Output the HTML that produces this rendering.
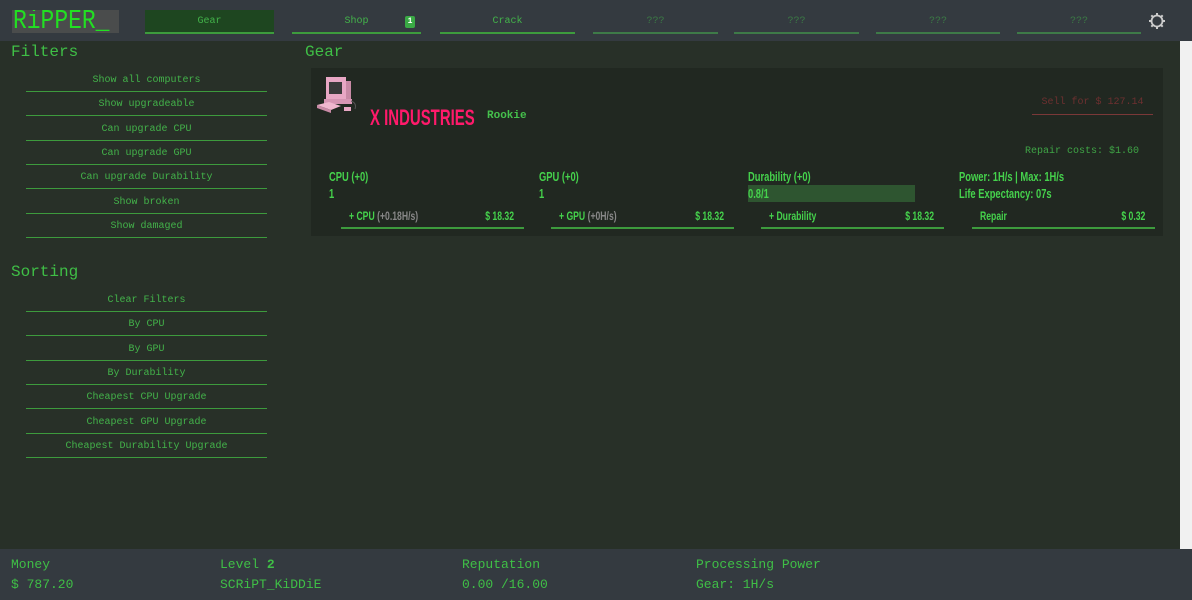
<!DOCTYPE html>
<html><head><style>
*{margin:0;padding:0;box-sizing:border-box}
body{width:1192px;height:600px;overflow:hidden;background:#283028;font-family:"Liberation Mono",monospace;color:#3fbf46;position:relative}
.a{position:absolute}
#top{left:0;top:0;width:1192px;height:41px;background:#343a40}
.tab{position:absolute;top:10px;height:24px;border-bottom:2px solid #3d9b3d;font-size:10px;text-align:center;line-height:24px;color:#43b34a}
.tab.q{color:#3b7a45;border-bottom-color:#3e7a48}
#foot{left:0;top:549px;width:1192px;height:51px;background:#343a40;font-size:13px;color:#3fbf46}
.btn{position:absolute;left:26px;width:241px;height:24px;border-bottom:1px solid #3d9b3d;font-size:10px;text-align:center;line-height:26px;color:#43b34a}
h2{position:absolute;font-weight:normal;font-size:16px;color:#3fbf46}
.n{font-family:"Liberation Sans",sans-serif;font-weight:bold;color:#45d24c;font-size:13px;transform:scaleX(.72);transform-origin:left;white-space:nowrap}
.ub{position:absolute;top:205px;width:183px;height:24px;border-bottom:2px solid #3d9b3d;line-height:22px;font-family:"Liberation Sans",sans-serif;font-weight:bold;color:#45d24c;font-size:12px}
.ub .l{position:absolute;left:8px;transform:scaleX(.72);transform-origin:left;white-space:nowrap}
.ub .r{position:absolute;right:10px;transform:scaleX(.72);transform-origin:right;white-space:nowrap}
</style></head><body>
<div id="top" class="a"></div>
<div class="a" style="left:12px;top:10px;width:107px;height:23px;background:#4a4c4c;overflow:hidden"><div style="color:#22e022;font-size:27px;line-height:24px;font-family:'Liberation Mono',monospace;transform:scaleX(.85);transform-origin:left;white-space:nowrap;margin-left:1px">RiPPER_</div></div>
<div class="tab" style="left:145px;width:129px;background:#1e4620">Gear</div>
<div class="tab" style="left:292px;width:129px">Shop<span style="position:absolute;left:113px;top:6px;width:10px;height:12px;background:#3aaa45;color:#fff;border-radius:2px;font-size:8px;line-height:12px;font-weight:bold">1</span></div>
<div class="tab" style="left:440px;width:135px">Crack</div>
<div class="tab q" style="left:593px;width:125px">???</div>
<div class="tab q" style="left:734px;width:125px">???</div>
<div class="tab q" style="left:876px;width:124px">???</div>
<div class="tab q" style="left:1017px;width:124px">???</div>
<svg class="a" style="left:1148px;top:12px" width="18" height="18" viewBox="0 0 18 18"><circle cx="9" cy="9" r="5.5" fill="none" stroke="#ccc" stroke-width="1.8"/><g stroke="#ccc" stroke-width="2"><path d="M9 1v3M9 14v3M1 9h3M14 9h3M3.3 3.3l2 2M12.7 12.7l2 2M3.3 14.7l2-2M12.7 5.3l2-2"/></g></svg>
<div class="a" style="left:1180px;top:41px;width:12px;height:508px;background:#f1f1f1"></div>

<h2 style="left:11px;top:43px">Filters</h2>
<div class="btn" style="top:68px">Show all computers</div>
<div class="btn" style="top:92px">Show upgradeable</div>
<div class="btn" style="top:117px">Can upgrade CPU</div>
<div class="btn" style="top:141px">Can upgrade GPU</div>
<div class="btn" style="top:165px">Can upgrade Durability</div>
<div class="btn" style="top:190px">Show broken</div>
<div class="btn" style="top:214px">Show damaged</div>
<h2 style="left:11px;top:263px">Sorting</h2>
<div class="btn" style="top:288px">Clear Filters</div>
<div class="btn" style="top:312px">By CPU</div>
<div class="btn" style="top:337px">By GPU</div>
<div class="btn" style="top:361px">By Durability</div>
<div class="btn" style="top:385px">Cheapest CPU Upgrade</div>
<div class="btn" style="top:410px">Cheapest GPU Upgrade</div>
<div class="btn" style="top:434px">Cheapest Durability Upgrade</div>

<h2 style="left:305px;top:43px">Gear</h2>
<div class="a" style="left:311px;top:68px;width:852px;height:168px;background:#212821"></div>
<svg class="a" style="left:316px;top:73px" width="46" height="46" viewBox="0 0 46 46">
<rect x="10" y="4" width="20" height="22" fill="#e8a7c4"/><rect x="30" y="8" width="5" height="18" fill="#c98aa6"/>
<rect x="13" y="9" width="13" height="12" fill="#3a3a3a"/>
<rect x="8" y="26" width="28" height="5" fill="#d695b3"/>
<path d="M1 32l12-3 12 4-10 4z" fill="#f0b7cf"/><path d="M1 32v3l14 5v-3z" fill="#c98aa6"/>
<rect x="28" y="34" width="7" height="4" fill="#e8a7c4"/><path d="M35 28q6 2 4 8" stroke="#555" fill="none"/></svg>
<div class="a" style="left:370px;top:105px;font-family:'Liberation Sans',sans-serif;font-weight:bold;font-size:22px;color:#ff1a6b;transform:scaleX(.68);transform-origin:left;white-space:nowrap">X INDUSTRIES</div>
<div class="a" style="left:487px;top:110px;font-size:11px;font-weight:bold;color:#45c04c">Rookie</div>
<div class="a" style="left:1032px;top:92px;width:121px;height:23px;border-bottom:1px solid #7a3838;font-size:10px;color:#6e3030;text-align:center;line-height:22px">Sell for $ 127.14</div>
<div class="a" style="left:900px;top:146px;width:239px;text-align:right;font-size:10px;color:#3fa546">Repair costs: $1.60</div>

<div class="a n" style="left:329px;top:169px">CPU (+0)</div><div class="a n" style="left:329px;top:186px">1</div>
<div class="a n" style="left:539px;top:169px">GPU (+0)</div><div class="a n" style="left:539px;top:186px">1</div>
<div class="a n" style="left:748px;top:169px">Durability (+0)</div>
<div class="a" style="left:748px;top:185px;width:167px;height:17px;background:#2e5530"></div>
<div class="a n" style="left:748px;top:186px">0.8/1</div>
<div class="a n" style="left:959px;top:169px">Power: 1H/s | Max: 1H/s</div>
<div class="a n" style="left:959px;top:186px">Life Expectancy: 07s</div>

<div class="ub" style="left:341px"><span class="l">+ CPU <span style="color:#888">(+0.18H/s)</span></span><span class="r">$ 18.32</span></div>
<div class="ub" style="left:551px"><span class="l">+ GPU <span style="color:#888">(+0H/s)</span></span><span class="r">$ 18.32</span></div>
<div class="ub" style="left:761px"><span class="l">+ Durability</span><span class="r">$ 18.32</span></div>
<div class="ub" style="left:972px"><span class="l">Repair</span><span class="r">$ 0.32</span></div>

<div id="foot" class="a">
<div class="a" style="left:11px;top:8px">Money</div><div class="a" style="left:11px;top:28px">$ 787.20</div>
<div class="a" style="left:220px;top:8px">Level <b>2</b></div><div class="a" style="left:220px;top:28px">SCRiPT_KiDDiE</div>
<div class="a" style="left:462px;top:8px">Reputation</div><div class="a" style="left:462px;top:28px">0.00 /16.00</div>
<div class="a" style="left:696px;top:8px">Processing Power</div><div class="a" style="left:696px;top:28px">Gear: 1H/s</div>
</div>
</body></html>
